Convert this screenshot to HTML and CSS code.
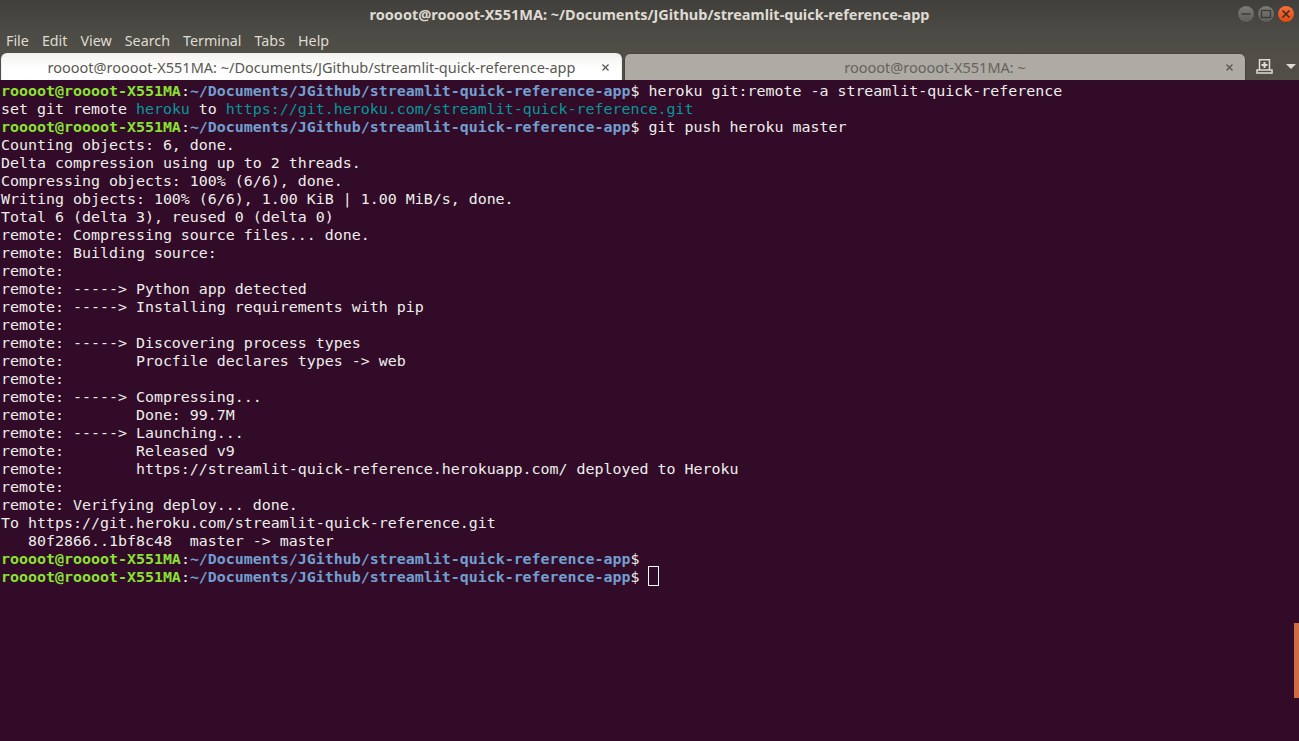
FILE: index.html
```html
<!DOCTYPE html>
<html lang="en">
<head>
<meta charset="utf-8">
<title>Terminal</title>
<link rel="stylesheet" href="styles.css">
</head>
<body>
<div class="window">
  <header class="chrome">
    <div class="titlebar">
      <span class="title">roooot@roooot-X551MA: ~/Documents/JGithub/streamlit-quick-reference-app</span>
      <div class="controls">
        <span class="ctl"><svg width="16" height="16" viewBox="0 0 16 16"><path d="M3.500 8h9" stroke="#3a3a36" stroke-width="1.400"/></svg></span>
        <span class="ctl"><svg width="16" height="16" viewBox="0 0 16 16"><rect x="3.500" y="4.500" width="9" height="7" fill="none" stroke="#3a3a36" stroke-width="1.300"/></svg></span>
        <span class="ctl close"><svg width="16" height="16" viewBox="0 0 16 16"><path d="M4.500 4.500l7 7M11.500 4.500l-7 7" stroke="#3b2a20" stroke-width="1.500"/></svg></span>
      </div>
    </div>
    <nav class="menubar">
      <span>File</span><span>Edit</span><span>View</span><span>Search</span><span>Terminal</span><span>Tabs</span><span>Help</span>
    </nav>
    <div class="tabbar">
      <div class="tab active">
        <span class="tab-label">roooot@roooot-X551MA: ~/Documents/JGithub/streamlit-quick-reference-app</span>
        <svg class="tab-x" width="9" height="9" viewBox="0 0 9 9"><path d="M1.500 1.500l6 6M7.500 1.500l-6 6" stroke="#55534e" stroke-width="1.200"/></svg>
      </div>
      <div class="tab second">
        <span class="tab-label">roooot@roooot-X551MA: ~</span>
        <svg class="tab-x" width="9" height="9" viewBox="0 0 9 9"><path d="M1.500 1.500l6 6M7.500 1.500l-6 6" stroke="#55534e" stroke-width="1.200"/></svg>
      </div>
      <div class="tab-tools">
        <svg width="17" height="15" viewBox="0 0 17 15"><path d="M3.500 .8v10.200H1v3h15v-3h-2.500V.8z M3.500 11h10" fill="none" stroke="#dfdbd2" stroke-width="1.500"/><path d="M8.500 3v6M5.500 6h6" stroke="#dfdbd2" stroke-width="2"/></svg>
        <svg width="10" height="5" viewBox="0 0 10 5"><path d="M0 0h10L5 5z" fill="#dfdbd2"/></svg>
      </div>
    </div>
  </header>
  <main class="terminal">
<pre class="output"><span class="u">roooot@roooot-X551MA</span>:<span class="p">~/Documents/JGithub/streamlit-quick-reference-app</span>$ heroku git:remote -a streamlit-quick-reference
set git remote <span class="t">heroku</span> to <span class="t">https://git.heroku.com/streamlit-quick-reference.git</span>
<span class="u">roooot@roooot-X551MA</span>:<span class="p">~/Documents/JGithub/streamlit-quick-reference-app</span>$ git push heroku master
Counting objects: 6, done.
Delta compression using up to 2 threads.
Compressing objects: 100% (6/6), done.
Writing objects: 100% (6/6), 1.00 KiB | 1.00 MiB/s, done.
Total 6 (delta 3), reused 0 (delta 0)
remote: Compressing source files... done.
remote: Building source:
remote:
remote: -----&gt; Python app detected
remote: -----&gt; Installing requirements with pip
remote:
remote: -----&gt; Discovering process types
remote:        Procfile declares types -&gt; web
remote:
remote: -----&gt; Compressing...
remote:        Done: 99.7M
remote: -----&gt; Launching...
remote:        Released v9
remote:        https://streamlit-quick-reference.herokuapp.com/ deployed to Heroku
remote:
remote: Verifying deploy... done.
To https://git.heroku.com/streamlit-quick-reference.git
   80f2866..1bf8c48  master -&gt; master
<span class="u">roooot@roooot-X551MA</span>:<span class="p">~/Documents/JGithub/streamlit-quick-reference-app</span>$
<span class="u">roooot@roooot-X551MA</span>:<span class="p">~/Documents/JGithub/streamlit-quick-reference-app</span>$ <span class="cursor"> </span></pre>
    <div class="scroll-thumb"></div>
  </main>
</div>
</body>
</html>
```
FILE: styles.css
```css
* { box-sizing: border-box; }
html, body { margin: 0; height: 100%; overflow: hidden; background: #310b27; }
.window { display: flex; flex-direction: column; height: 741px; }
.chrome {
  height: 80px;
  display: flex;
  flex-direction: column;
  background: linear-gradient(#403f3b 0, #4b4a44 30px, #504e47 53px, #504e47 80px);
  font-family: "Noto Sans", "Open Sans", sans-serif;
}
.titlebar {
  height: 30px;
  position: relative;
  display: flex;
  align-items: center;
  justify-content: center;
}
.title { font-size: 14.500px; font-weight: 700; color: #dfdbd2; position: relative; top: -1px; }
.controls { position: absolute; right: 5px; top: 6px; display: flex; gap: 4px; }
.ctl {
  width: 16px; height: 16px; border-radius: 50%;
  background: linear-gradient(#7d7b75, #5f5d57);
  box-shadow: 0 0 0 .5px #3a3935;
  display: flex;
}
.close { background: linear-gradient(#f2713a, #de4b14); }
.menubar {
  height: 23px;
  display: flex;
  gap: 13px;
  padding: 0 6px 2px;
  align-items: center;
  font-size: 14.300px;
  color: #dfdbd2;
}
.tabbar { height: 27px; display: flex; padding-left: 1px; gap: 2px; }
.tab {
  height: 27px;
  border-radius: 6px 6px 0 0;
  background: #aeaba4;
  border: 1px solid #46443f;
  border-bottom: 0;
  position: relative;
  display: flex;
  align-items: center;
  justify-content: center;
  font-size: 14.500px;
  color: #66635c;
}
.tab.active { width: 621px; background: linear-gradient(#f4f3f1, #ffffff 60%); color: #5a5852; border-color: #f0efed; }
.tab.second { width: 622px; }
.tab-x { position: absolute; right: 11px; top: 9px; }
.tab-tools { flex: 1; display: flex; align-items: center; gap: 13px; padding-left: 8px; }
.terminal { flex: 1; position: relative; background: #310b27; padding-top: 2px; }
.output {
  margin: 0;
  padding-left: 1px;
  font-family: "DejaVu Sans Mono", "Liberation Mono", monospace;
  font-size: 14.950px;
  line-height: 18px;
  color: #eeeeec;
}
.u { color: #8ae234; font-weight: 700; }
.p { color: #729fcf; font-weight: 700; }
.t { color: #06989a; }
.cursor { display: inline-block; width: 11px; height: 20px; margin-left: -1px; border: 1.500px solid #fff; vertical-align: top; margin-top: -2px; }
.scroll-thumb { position: absolute; right: 0; top: 543px; width: 5px; height: 75px; background: #cf6b42; }
```
